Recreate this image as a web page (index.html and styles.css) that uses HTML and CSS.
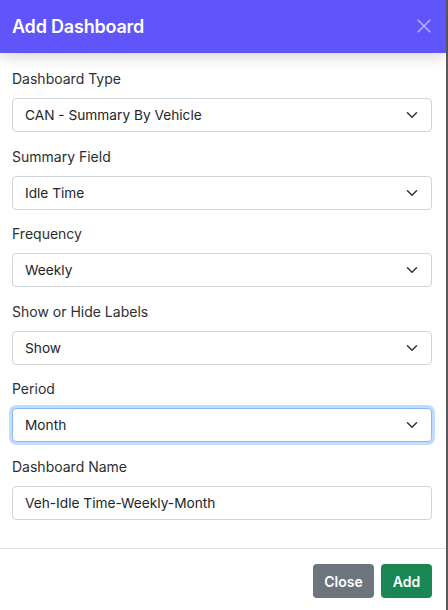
FILE: index.html
```html
<!DOCTYPE html>
<html>
<head>
<meta charset="utf-8">
<link rel="stylesheet" href="styles.css">
</head>
<body>
<div class="modal">
  <div class="modal-header">
    <h1 class="modal-title">Add Dashboard</h1>
    <button class="btn-close" aria-label="Close">
      <svg width="14" height="14" viewBox="0 0 14 14"><path d="M0.7 0.7 L13.3 13.3 M13.3 0.7 L0.7 13.3" stroke="currentColor" stroke-width="1.6" fill="none"/></svg>
    </button>
  </div>
  <div class="modal-body">
    <div class="group">
      <label class="label">Dashboard Type</label>
      <div class="select"><span>CAN - Summary By Vehicle</span><svg class="chev" width="12" height="8" viewBox="0 0 12 8"><path d="M1.5 1.8 L6 6.2 L10.5 1.8" stroke="#343a40" stroke-width="1.6" fill="none" stroke-linecap="round" stroke-linejoin="round"/></svg></div>
    </div>
    <div class="group">
      <label class="label">Summary Field</label>
      <div class="select"><span>Idle Time</span><svg class="chev" width="12" height="8" viewBox="0 0 12 8"><path d="M1.5 1.8 L6 6.2 L10.5 1.8" stroke="#343a40" stroke-width="1.6" fill="none" stroke-linecap="round" stroke-linejoin="round"/></svg></div>
    </div>
    <div class="group">
      <label class="label">Frequency</label>
      <div class="select"><span>Weekly</span><svg class="chev" width="12" height="8" viewBox="0 0 12 8"><path d="M1.5 1.8 L6 6.2 L10.5 1.8" stroke="#343a40" stroke-width="1.6" fill="none" stroke-linecap="round" stroke-linejoin="round"/></svg></div>
    </div>
    <div class="group">
      <label class="label">Show or Hide Labels</label>
      <div class="select"><span>Show</span><svg class="chev" width="12" height="8" viewBox="0 0 12 8"><path d="M1.5 1.8 L6 6.2 L10.5 1.8" stroke="#343a40" stroke-width="1.6" fill="none" stroke-linecap="round" stroke-linejoin="round"/></svg></div>
    </div>
    <div class="group">
      <label class="label">Period</label>
      <div class="select focus"><span>Month</span><svg class="chev" width="12" height="8" viewBox="0 0 12 8"><path d="M1.5 1.8 L6 6.2 L10.5 1.8" stroke="#343a40" stroke-width="1.6" fill="none" stroke-linecap="round" stroke-linejoin="round"/></svg></div>
    </div>
    <div class="group last">
      <label class="label">Dashboard Name</label>
      <div class="input"><span>Veh-Idle Time-Weekly-Month</span></div>
    </div>
  </div>
  <div class="modal-footer">
    <button class="btn btn-secondary">Close</button>
    <button class="btn btn-success">Add</button>
  </div>
</div>
</body>
</html>
```
FILE: styles.css
```css
html, body {
  margin: 0;
  padding: 0;
  background: #5b5b5b;
  height: 610px;
  overflow: hidden;
}
body {
  font-family: "Inter", "Noto Sans", sans-serif;
  color: #212529;
}
.modal {
  width: 446px;
  height: 610px;
  background: #fff;
  display: flex;
  flex-direction: column;
}
.modal-header {
  height: 53px;
  background: #5f55fa;
  display: flex;
  align-items: center;
  justify-content: space-between;
  padding: 0 15px 0 12px;
  box-shadow: 0 4px 14px rgba(0,0,0,0.16);
  position: relative;
  z-index: 1;
  flex-shrink: 0;
}
.modal-title {
  margin: 0;
  font-size: 18px;
  font-weight: 600;
  color: #fff;
  letter-spacing: -0.2px;
}
.btn-close {
  background: none;
  border: 0;
  padding: 0;
  color: #b4aefc;
  width: 14px;
  height: 14px;
  display: flex;
  margin-top: -1px;
}
.modal-body {
  padding: 15px 14px 0 12px;
  height: 496px;
  box-sizing: border-box;
  border-bottom: 1px solid #dee2e6;
  flex-shrink: 0;
}
.group {
  margin-bottom: 13.5px;
}
.label {
  display: block;
  font-size: 14px;
  line-height: 22px;
  margin-bottom: 8px;
  color: #2b2f33;
}
.select, .input {
  height: 34px;
  box-sizing: border-box;
  border: 1px solid #ced4da;
  border-radius: 4px;
  display: flex;
  align-items: center;
  justify-content: space-between;
  padding: 0 13px 0 12px;
  font-size: 13.7px;
  color: #212529;
  background: #fff;
}
.select.focus {
  border-color: #86b7fe;
  box-shadow: 0 0 0 3px rgba(13,110,253,0.25);
}
.chev {
  display: block;
}
.modal-footer {
  display: flex;
  justify-content: flex-end;
  gap: 7px;
  padding: 15px 14px 0 12px;
}
.btn {
  height: 34px;
  border: 0;
  border-radius: 4px;
  color: #fff;
  font-family: "Inter", "Noto Sans", sans-serif;
  font-size: 14px;
  font-weight: 600;
  padding: 0;
}
.btn-secondary {
  background: #6c757d;
  width: 61px;
}
.btn-success {
  background: #198754;
  width: 51px;
}
```
